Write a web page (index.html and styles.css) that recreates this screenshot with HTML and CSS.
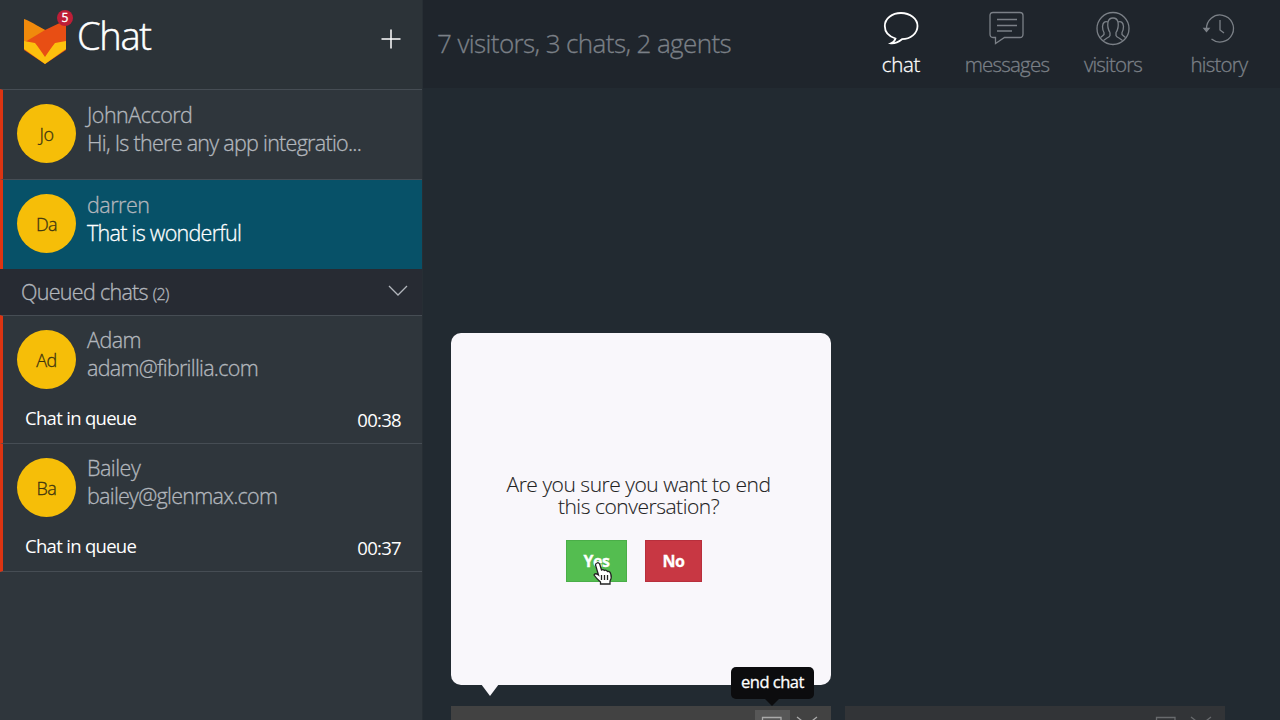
FILE: index.html
```html
<!DOCTYPE html>
<html lang="en">
<head>
    <meta charset="UTF-8">
    <meta name="viewport" content="width=device-width, initial-scale=1.0">
    <title>Chat</title>
    <link rel="stylesheet" href="styles.css">
</head>
<body>
    <!-- Sidebar -->
    <aside class="sidebar">
        <header class="sidebar-header">
            <div class="logo">
                <svg width="42" height="46" viewBox="0 0 42 46">
                    <path d="M0 1 L21 11 L42 1 V31 L21 45 L0 31 Z" fill="#e84e14"/>
                    <path d="M0 0 Q2 0 21 11 L1 23 H0 Z" fill="#f08a0c"/>
                    <path d="M0 22 L11 24 Q15 29 21 38 Q27 29 31 24 L42 22 V30 L21 45 L0 30 Z" fill="#fcc00d"/>
                </svg>
                <span class="badge">5</span>
            </div>
            <h1>Chat</h1>
            <svg class="add" width="20" height="20" viewBox="0 0 20 20"><path d="M10 .5V19.500M.5 10H19.500"/></svg>
        </header>

        <div class="chat-item">
            <div class="avatar">Jo</div>
            <div class="chat-text">
                <div class="name">JohnAccord</div>
                <div class="message">Hi, Is there any app integratio...</div>
            </div>
        </div>
        <div class="chat-item selected">
            <div class="avatar">Da</div>
            <div class="chat-text">
                <div class="name">darren</div>
                <div class="message">That is wonderful</div>
            </div>
        </div>

        <div class="queue-title">
            <span>Queued chats <small>(2)</small></span>
            <svg width="20" height="12" viewBox="0 0 20 12"><path d="M1 1L10 10L19 1"/></svg>
        </div>

        <div class="chat-item queued">
            <div class="avatar">Ad</div>
            <div class="chat-text">
                <div class="name">Adam</div>
                <div class="message">adam@fibrillia.com</div>
            </div>
            <div class="queue-status"><span>Chat in queue</span><span class="time">00:38</span></div>
        </div>
        <div class="chat-item queued">
            <div class="avatar">Ba</div>
            <div class="chat-text">
                <div class="name">Bailey</div>
                <div class="message">bailey@glenmax.com</div>
            </div>
            <div class="queue-status"><span>Chat in queue</span><span class="time">00:37</span></div>
        </div>
    </aside>

    <!-- Main area -->
    <main class="main">
        <header class="topbar">
            <div class="summary">7 visitors, 3 chats, 2 agents</div>
            <nav>
                <a class="nav-item active">
                    <svg width="36" height="36" viewBox="0 0 36 36"><path d="M12.500 28.500C6 26.500 1.800 22 1.800 16C1.800 8.500 9 3 18 3S34.500 8.500 34.500 16S27.500 29 19 29.200C16 31.500 12.500 33.800 8 33.300C10.500 32 12 30.500 12.500 28.500Z"/></svg>
                    <span>chat</span>
                </a>
                <a class="nav-item">
                    <svg width="36" height="36" viewBox="0 0 36 36"><path d="M4 2.500H31Q34 2.500 34 5.500V24Q34 27.500 31 27.500H15.500L6.500 33.500V27.500H4Q1 27.500 1 24V5.500Q1 2.500 4 2.500ZM8 9.500H28M8 15.500H28M8 21H23"/></svg>
                    <span>messages</span>
                </a>
                <a class="nav-item">
                    <svg width="36" height="36" viewBox="0 0 36 36">
                        <circle cx="18" cy="18.500" r="16"/>
                        <path d="M15 22.500C13 19.500 12.500 15 13 12Q14 8 18 8T23 12C23.500 15 23 19.500 21 22.500V25.500Q21.500 27 24 28L27.500 30.500M15 22.500V25.500Q14.500 27 12 28L8.500 30.500"/>
                        <path d="M13 12Q8 10.500 7.500 16.500Q7.500 20 9 22.500V24.500Q7.500 26 5.500 27.500M23 12Q28 10.500 28.500 16.500Q28.500 20 27 22.500V24.500Q28.500 26 30.500 27.500"/>
                    </svg>
                    <span>visitors</span>
                </a>
                <a class="nav-item">
                    <svg width="36" height="36" viewBox="0 0 36 36"><path d="M5.500 19A13.500 13.500 0 1 1 10.500 29M19 10V20L23 23"/><path class="arrow" d="M3 18.500H8L5.500 21.500Z"/></svg>
                    <span>history</span>
                </a>
            </nav>
        </header>

        <div class="windows">
            <section class="window">
                <div class="dialog">
                    <p>Are you sure you want to end<br>this conversation?</p>
                    <div class="buttons">
                        <button class="yes">Yes</button>
                        <button class="no">No</button>
                    </div>
                    <svg class="cursor" width="22" height="26" viewBox="0 0 22 26"><path d="M5 2Q7 1 8 4L9.500 9Q11 8 12.500 9.500Q14 8.500 15.500 10.500Q18 10 18.800 13Q20 17 18 20V23H8.500V21Q4 17 2 14Q3 11.500 6.500 14L3.500 4Q3.500 2.500 5 2Z"/><path d="M9.500 14V19M12.500 14V19M15.500 14V19"/></svg>
                </div>
                <div class="window-bar">
                    <span class="bar-button"><svg width="22" height="16" viewBox="0 0 22 16"><path d="M1.500 14V1.500H20V14"/></svg></span>
                    <svg width="22" height="16" viewBox="0 0 22 16"><path d="M1 1L19 15M21 1L3 15"/></svg>
                    <span class="tooltip">end chat</span>
                </div>
            </section>
            <section class="window inactive">
                <div class="window-bar">
                    <span class="bar-button"><svg width="22" height="16" viewBox="0 0 22 16"><path d="M1.500 14V1.500H20V14"/></svg></span>
                    <svg width="22" height="16" viewBox="0 0 22 16"><path d="M1 1L19 15M21 1L3 15"/></svg>
                </div>
            </section>
        </div>
    </main>
</body>
</html>
```
FILE: styles.css
```css
* {
    box-sizing: border-box;
}
body {
    margin: 0;
    height: 720px;
    display: flex;
    overflow: hidden;
    font-family: "Open Sans", "Noto Sans", sans-serif;
    font-weight: 300;
    -webkit-text-stroke: 0.3px;
    background-color: #222a31;
    color: #fff;
}
svg {
    display: block;
    fill: none;
    stroke: currentColor;
    stroke-width: 1.3;
}
h1, p {
    margin: 0;
    font-weight: 300;
}

/* Sidebar */
.sidebar {
    width: 423px;
    background-color: #2f363c;
    border-right: 1px solid #272e34;
}
.sidebar-header {
    height: 89px;
    display: flex;
    align-items: flex-start;
    padding: 0 21px 0 24px;
    background-color: #2c3338;
}
.logo {
    position: relative;
    margin-top: 19px;
}
.logo svg {
    stroke: none;
}
.badge {
    position: absolute;
    left: 33px;
    top: -9px;
    width: 16px;
    height: 16px;
    border-radius: 50%;
    background-color: #be1e37;
    font-size: 12px;
    font-weight: 400;
    line-height: 16px;
    text-align: center;
}
h1 {
    margin: 10px 0 0 11px;
    font-size: 38px;
    line-height: 50px;
    letter-spacing: -1.3px;
    -webkit-text-stroke: 0.5px;
}
.add {
    margin: 29px 0 0 auto;
    stroke-width: 1.5;
}
.chat-item {
    height: 90px;
    display: flex;
    flex-wrap: wrap;
    align-content: flex-start;
    padding: 14px 21px 0 14px;
    border-left: 3px solid #dc3412;
    border-top: 1px solid #464d54;
}
.chat-item.selected {
    background-color: #075168;
}
.chat-item.queued {
    height: 128px;
}
.chat-item.queued:last-child {
    height: 129px;
    border-bottom: 1px solid #464d54;
}
.avatar {
    width: 59px;
    height: 59px;
    border-radius: 50%;
    background-color: #f6be08;
    color: #3c3410;
    font-size: 18px;
    line-height: 60px;
    letter-spacing: -0.5px;
    text-align: center;
}
.chat-text {
    margin: -3px 0 0 11px;
    font-size: 21.5px;
    line-height: 28px;
    letter-spacing: -0.5px;
    color: #b2b6bc;
}
.message {
    letter-spacing: -0.72px;
}
.selected .message {
    color: #fff;
}
.queue-title {
    height: 46px;
    display: flex;
    align-items: center;
    justify-content: space-between;
    padding: 0 14px 2px 21px;
    background-color: #272b33;
    color: #b2b6bc;
    font-size: 21.5px;
    letter-spacing: -0.7px;
}
.queue-title small {
    font-size: 16px;
}
.queued .chat-text {
    margin-top: -4px;
}
.queue-status {
    width: 100%;
    display: flex;
    justify-content: space-between;
    padding: 16px 0 0 8px;
    font-size: 18.5px;
    line-height: 26px;
    letter-spacing: -0.7px;
    font-weight: 400;
    -webkit-text-stroke: 0;
}
.time {
    padding-top: 2px;
}

/* Main area */
.main {
    flex: 1;
    display: flex;
    flex-direction: column;
}
.topbar {
    height: 88px;
    display: flex;
    justify-content: space-between;
    background-color: #1f252c;
    color: #7b8087;
}
.summary {
    padding: 25px 0 0 14px;
    font-size: 26px;
    line-height: 36px;
    letter-spacing: -0.6px;
}
nav {
    display: flex;
    padding: 10px 8px 0 0;
}
.nav-item {
    width: 106px;
    display: flex;
    flex-direction: column;
    align-items: center;
    font-size: 20.5px;
    line-height: 37px;
    letter-spacing: -0.8px;
}
.nav-item.active {
    color: #fff;
    letter-spacing: -0.3px;
}
.active svg {
    stroke-width: 1.8;
}
.nav-item .arrow {
    fill: currentColor;
}
.windows {
    flex: 1;
    display: flex;
    align-items: flex-end;
    gap: 14px;
    padding-left: 28px;
}
.window {
    width: 380px;
}
.dialog {
    position: relative;
    height: 352px;
    margin-bottom: 21px;
    padding-top: 140px;
    border-radius: 10px;
    background-color: #f9f7fb;
    color: #222;
    text-align: center;
}
.dialog::after {
    content: '';
    position: absolute;
    left: 30px;
    top: 351px;
    border: 9px solid transparent;
    border-top: 12px solid #f9f7fb;
    border-bottom: 0;
}
.dialog p {
    padding-right: 5px;
    font-size: 21px;
    line-height: 22px;
    letter-spacing: -0.47px;
    -webkit-text-stroke: 0.1px;
}
.buttons {
    display: flex;
    gap: 18px;
    margin: 23px 0 0 115px;
}
.buttons button {
    width: 61px;
    height: 42px;
    padding: 0;
    border: 1px solid #4aae48;
    background-color: #54bd50;
    color: #fff;
    font-family: inherit;
    font-size: 16px;
    font-weight: 700;
    letter-spacing: -0.5px;
}
.buttons .no {
    width: 57px;
    border-color: #b82f3c;
    background-color: #c83743;
}
.cursor {
    position: absolute;
    left: 141px;
    top: 228px;
    fill: #fff;
    stroke: #222;
}
.window-bar {
    position: relative;
    height: 14px;
    display: flex;
    align-items: flex-start;
    justify-content: flex-end;
    gap: 6px;
    padding: 4px 13px 0 0;
    background-color: #424242;
    color: #aaa;
}
.bar-button {
    width: 35px;
    height: 10px;
    padding-left: 6px;
    background-color: #575757;
}
.window-bar svg {
    margin-top: 6px;
}
.tooltip {
    position: absolute;
    left: 280px;
    top: -39px;
    width: 83px;
    height: 32px;
    border-radius: 5px;
    background-color: #0c0c0e;
    color: #fff;
    font-size: 16.5px;
    font-weight: 400;
    line-height: 30px;
    letter-spacing: -0.5px;
    text-align: center;
}
.tooltip::after {
    content: '';
    position: absolute;
    left: 34px;
    top: 32px;
    border: 7px solid transparent;
    border-top-color: #0c0c0e;
    border-bottom: 0;
}
.inactive .window-bar {
    background-color: #323437;
    color: #686a6d;
}
.inactive .bar-button {
    background: none;
}
```
